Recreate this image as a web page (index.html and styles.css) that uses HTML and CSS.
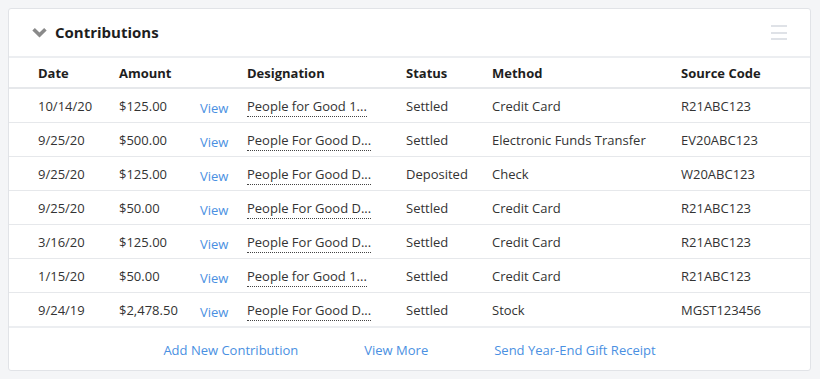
FILE: index.html
```html
<!DOCTYPE html>
<html>
<head>
<meta charset="utf-8">
<link rel="stylesheet" href="styles.css">
</head>
<body>
<div class="card">
  <div class="card-header">
    <div class="title">
      <svg class="chevron" width="15" height="11" viewBox="0 0 15 11"><path d="M1.6 2.2 L7.5 8 L13.4 2.2" fill="none" stroke="#8a8a8a" stroke-width="3.6" stroke-linejoin="miter"/></svg>
      <span>Contributions</span>
    </div>
    <div class="menu"><span></span><span></span><span></span></div>
  </div>
  <table class="grid">
    <colgroup>
      <col class="c-date"><col class="c-amount"><col class="c-view"><col class="c-desig"><col class="c-status"><col class="c-method"><col class="c-source">
    </colgroup>
    <thead>
      <tr><th>Date</th><th>Amount</th><th></th><th>Designation</th><th>Status</th><th>Method</th><th>Source Code</th></tr>
    </thead>
    <tbody>
      <tr><td>10/14/20</td><td>$125.00</td><td><a class="view">View</a></td><td><span class="desig">People for Good 1...</span></td><td>Settled</td><td>Credit Card</td><td>R21ABC123</td></tr>
      <tr><td>9/25/20</td><td>$500.00</td><td><a class="view">View</a></td><td><span class="desig">People For Good D...</span></td><td>Settled</td><td>Electronic Funds Transfer</td><td>EV20ABC123</td></tr>
      <tr><td>9/25/20</td><td>$125.00</td><td><a class="view">View</a></td><td><span class="desig">People For Good D...</span></td><td>Deposited</td><td>Check</td><td>W20ABC123</td></tr>
      <tr><td>9/25/20</td><td>$50.00</td><td><a class="view">View</a></td><td><span class="desig">People For Good D...</span></td><td>Settled</td><td>Credit Card</td><td>R21ABC123</td></tr>
      <tr><td>3/16/20</td><td>$125.00</td><td><a class="view">View</a></td><td><span class="desig">People For Good D...</span></td><td>Settled</td><td>Credit Card</td><td>R21ABC123</td></tr>
      <tr><td>1/15/20</td><td>$50.00</td><td><a class="view">View</a></td><td><span class="desig">People for Good 1...</span></td><td>Settled</td><td>Credit Card</td><td>R21ABC123</td></tr>
      <tr><td>9/24/19</td><td>$2,478.50</td><td><a class="view">View</a></td><td><span class="desig">People For Good D...</span></td><td>Settled</td><td>Stock</td><td>MGST123456</td></tr>
    </tbody>
  </table>
  <div class="card-footer">
    <a>Add New Contribution</a>
    <a>View More</a>
    <a>Send Year-End Gift Receipt</a>
  </div>
</div>
</body>
</html>
```
FILE: styles.css
```css
html, body {
  margin: 0;
  padding: 0;
  background: #f4f5f7;
}
body {
  padding: 8px 9px 8px 8px;
  font-family: "Open Sans", "Noto Sans", sans-serif;
  font-size: 13px;
  color: #333;
}
.card {
  background: #fff;
  border: 1px solid #e1e3e7;
  border-radius: 3px;
  width: 801px;
  height: 361px;
  box-sizing: content-box;
}
.card-header {
  height: 47px;
  border-bottom: 2px solid #eceef1;
  display: flex;
  align-items: center;
  justify-content: space-between;
  padding: 0 23px 0 23px;
}
.title {
  display: flex;
  align-items: center;
  gap: 8px;
  font-size: 15px;
  font-weight: 700;
  color: #1e1e1e;
  margin-top: -1px;
}
.chevron { margin-top: 1px; }
.menu {
  display: flex;
  flex-direction: column;
  gap: 4.5px;
  width: 16px;
  margin-top: 0;
}
.menu span {
  display: block;
  height: 2px;
  background: #dfe2e7;
}
.grid {
  width: 100%;
  border-collapse: collapse;
  table-layout: fixed;
}
.c-date { width: 110px; }
.c-amount { width: 81px; }
.c-view { width: 47px; }
.c-desig { width: 159px; }
.c-status { width: 86px; }
.c-method { width: 189px; }
.c-source { width: auto; }
th, td {
  text-align: left;
  padding: 0 0;
  white-space: nowrap;
}
th:first-child, td:first-child { padding-left: 29px; }
th {
  height: 29px;
  font-weight: 700;
  color: #1e1e1e;
  border-bottom: 2px solid #e6e8eb;
  vertical-align: middle;
}
td {
  height: 33px;
  border-bottom: 1px solid #e6e8eb;
  color: #333;
}
tbody tr:last-child td { border-bottom: 2px solid #eceef1; }
.view {
  color: #4a90e2;
  position: relative;
  top: 2px;
}
.desig {
  border-bottom: 1px dotted #444;
  padding-bottom: 1px;
}
.card-footer {
  display: flex;
  justify-content: center;
  gap: 66px;
  padding-top: 13px;
  color: #4a90e2;
}
a { cursor: pointer; }
```
